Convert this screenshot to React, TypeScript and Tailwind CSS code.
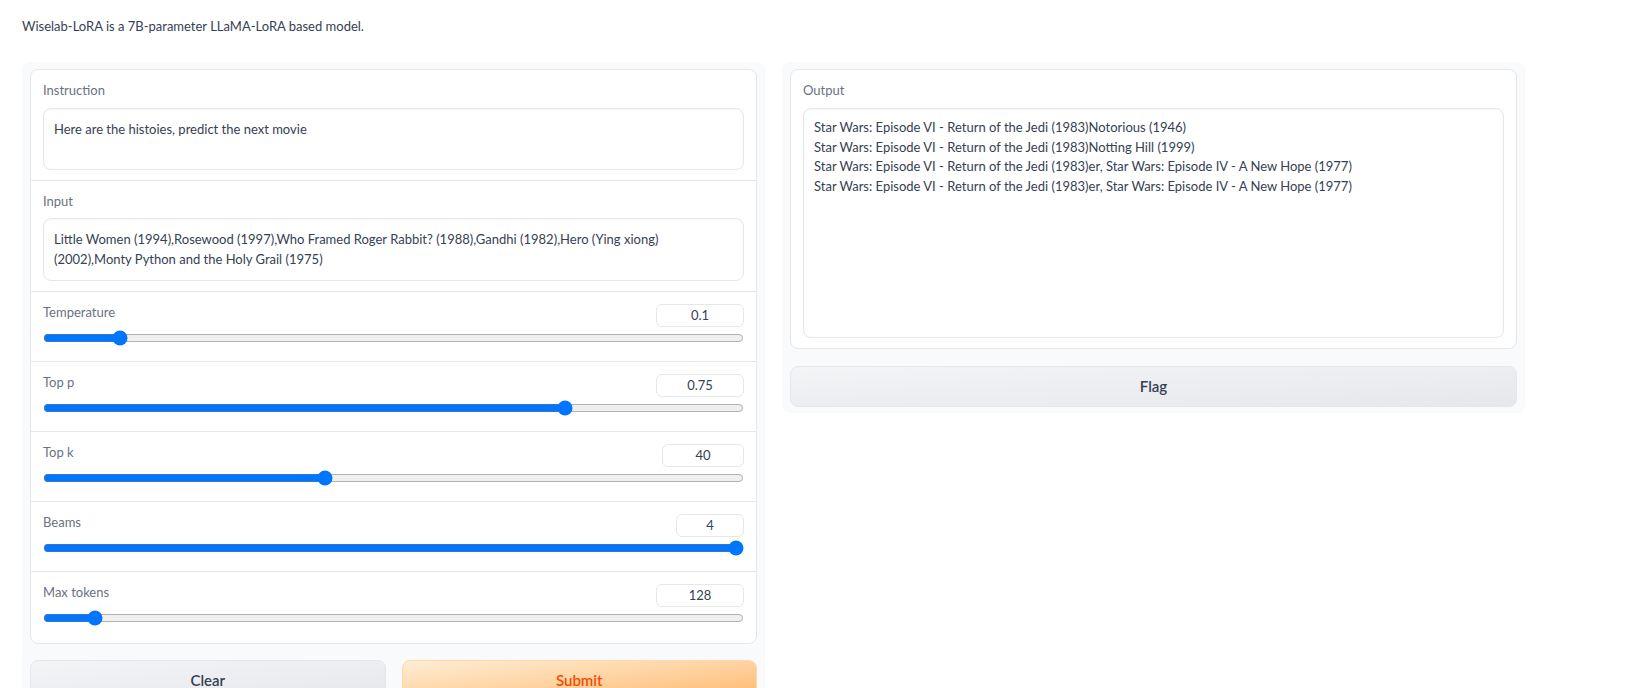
import React from "react";

interface SliderRow {
  label: string;
  value: string;
  min: number;
  max: number;
  step: number;
  num: number;
  boxWidth: string;
}

const sliders: SliderRow[] = [
  { label: "Temperature", value: "0.1", min: 0, max: 1, step: 0.1, num: 0.1, boxWidth: "w-[88px]" },
  { label: "Top p", value: "0.75", min: 0, max: 1, step: 0.01, num: 0.75, boxWidth: "w-[88px]" },
  { label: "Top k", value: "40", min: 0, max: 100, step: 1, num: 40, boxWidth: "w-[82px]" },
  { label: "Beams", value: "4", min: 1, max: 4, step: 1, num: 4, boxWidth: "w-[68px]" },
  { label: "Max tokens", value: "128", min: 1, max: 2000, step: 1, num: 128, boxWidth: "w-[88px]" },
];

const outputLines = [
  "Star Wars: Episode VI - Return of the Jedi (1983)Notorious (1946)",
  "Star Wars: Episode VI - Return of the Jedi (1983)Notting Hill (1999)",
  "Star Wars: Episode VI - Return of the Jedi (1983)er, Star Wars: Episode IV - A New Hope (1977)",
  "Star Wars: Episode VI - Return of the Jedi (1983)er, Star Wars: Episode IV - A New Hope (1977)",
];

function TextBlock({ label, lines, tall }: { label: string; lines: string[]; tall?: boolean }) {
  return (
    <div className="px-3 pt-3 pb-[10px]">
      <div className="text-[13px] leading-4 text-gray-500">{label}</div>
      <div
        className={`${tall ? "mt-[9px] h-[63px]" : "mt-[10px] h-[62px]"} rounded-lg border border-gray-200 bg-white px-[10px] py-[10px] text-[13px] leading-5 text-gray-700 shadow-[inset_0_1px_2px_rgba(0,0,0,0.04)]`}
      >
        {lines.map((l, i) => (
          <div key={i}>{l}</div>
        ))}
      </div>
    </div>
  );
}

function Slider({ row, last }: { row: SliderRow; last?: boolean }) {
  return (
    <div className={`px-3 pt-3 ${last ? "pb-[17px]" : "pb-[15px]"}`}>
      <div className="flex h-[23px] items-start justify-between">
        <span className="text-[13px] leading-4 text-gray-500">{row.label}</span>
        <div
          className={`${row.boxWidth} flex h-[23px] items-center justify-center rounded-md border border-gray-200 bg-white text-[13px] text-gray-700`}
        >
          {row.value}
        </div>
      </div>
      <input
        type="range"
        className="mt-[3px] block h-4 w-full"
        min={row.min}
        max={row.max}
        step={row.step}
        defaultValue={row.num}
      />
    </div>
  );
}

export default function App() {
  return (
    <div className="min-h-screen bg-white font-[Lato,sans-serif] text-gray-700">
      <div className="px-[22px] pt-[15px]">
        <p className="text-[13px] leading-[22px] text-gray-700">
          Wiselab-LoRA is a 7B-parameter LLaMA-LoRA based model.
        </p>

        <div className="mt-[25px] grid w-[1503px] grid-cols-2 items-start gap-[17px]">
          {/* Left column: inputs */}
          <div className="rounded-lg bg-gray-50 px-2 pt-[7px] pb-2">
            <div className="divide-y divide-gray-200 rounded-lg border border-gray-200 bg-white">
              <TextBlock label="Instruction" lines={["Here are the histoies, predict the next movie"]} />
              <TextBlock
                tall
                label="Input"
                lines={[
                  "Little Women (1994),Rosewood (1997),Who Framed Roger Rabbit? (1988),Gandhi (1982),Hero (Ying xiong)",
                  "(2002),Monty Python and the Holy Grail (1975)",
                ]}
              />
              {sliders.map((s, i) => (
                <Slider key={s.label} row={s} last={i === sliders.length - 1} />
              ))}
            </div>

            <div className="mt-4 grid grid-cols-2 gap-4">
              <button className="h-[41px] rounded-lg border border-gray-200 bg-gradient-to-br from-gray-100 to-gray-200 text-[15px] font-semibold text-gray-700">
                Clear
              </button>
              <button className="h-[41px] rounded-lg border border-orange-200 bg-gradient-to-br from-orange-100 to-orange-300 text-[15px] font-semibold text-orange-600">
                Submit
              </button>
            </div>
          </div>

          {/* Right column: output */}
          <div className="rounded-lg bg-gray-50 px-2 pt-[7px] pb-[6px]">
            <div className="rounded-lg border border-gray-200 bg-white px-3 pt-3 pb-[10px]">
              <div className="text-[13px] leading-4 text-gray-500">Output</div>
              <div className="mt-[10px] h-[230px] rounded-lg border border-gray-200 bg-white px-[10px] py-[9px] text-[13px] leading-[19.6px] text-gray-700 shadow-[inset_0_1px_2px_rgba(0,0,0,0.04)]">
                {outputLines.map((l, i) => (
                  <div key={i}>{l}</div>
                ))}
              </div>
            </div>
            <button className="mt-[17px] h-[41px] w-full rounded-lg border border-gray-200 bg-gradient-to-br from-gray-100 to-gray-200 text-[15px] font-semibold text-gray-700">
              Flag
            </button>
          </div>
        </div>
      </div>
    </div>
  );
}
